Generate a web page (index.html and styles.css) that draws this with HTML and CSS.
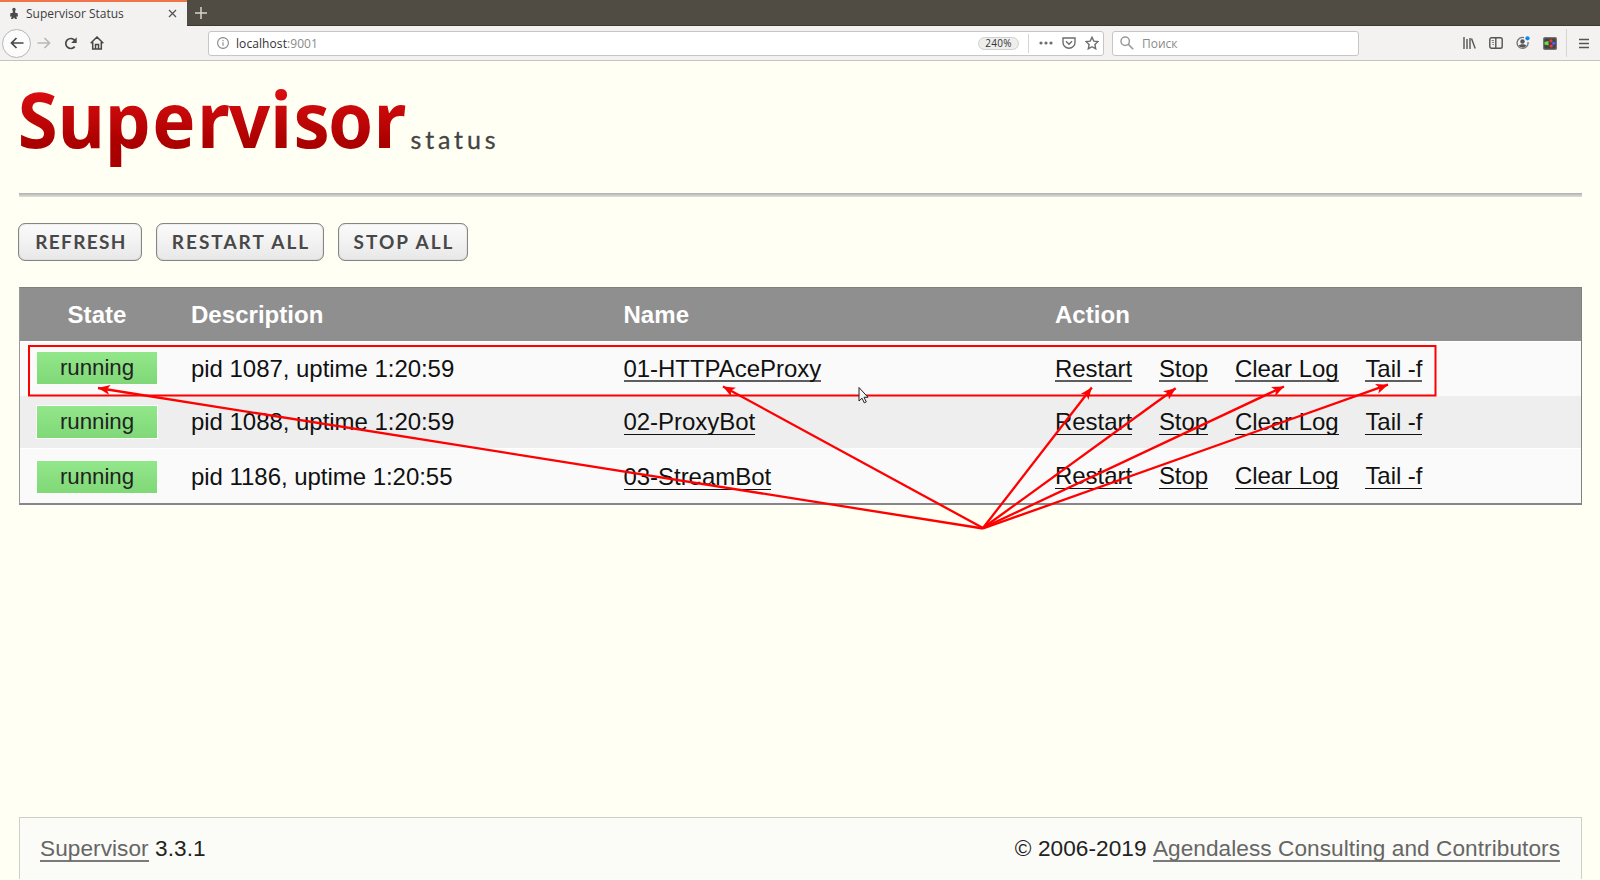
FILE: index.html
```
<!DOCTYPE html>
<html lang="en">
<head>
<meta charset="utf-8">
<title>Supervisor Status</title>
<link rel="stylesheet" href="styles.css">
</head>
<body>
<header class="chrome">
  <div class="tabstrip">
    <div class="tab">
      <svg class="favicon" width="10" height="13" viewBox="0 0 10 13"><circle cx="5" cy="2.500" r="1.700"/><path d="M4 3h2l.4 3H8.500l.5 3.500H7.300l.7 2.500H6.200L5 10.500 3.800 12H2l.7-2.500H1L1.500 6h2.100z"/></svg>
      <span class="tab-title">Supervisor Status</span>
      <svg class="tab-close" width="9" height="9" viewBox="0 0 9 9"><path d="M1 1l7 7M8 1L1 8"/></svg>
    </div>
    <svg class="newtab" width="12" height="12" viewBox="0 0 12 12"><path d="M6 0v12M0 6h12"/></svg>
  </div>
  <div class="toolbar">
    <div class="nav">
      <span class="back"><svg width="14" height="12" viewBox="0 0 14 12"><path d="M13.500 6H1.500M6.500 1l-5 5 5 5"/></svg></span>
      <svg class="forward" width="14" height="12" viewBox="0 0 14 12"><path d="M.5 6h12M7.500 1l5 5-5 5"/></svg>
      <svg class="reload" width="14" height="13" viewBox="0 0 14 13"><path d="M10.700 9.600A5 5 0 1 1 10.600 3.300"/><path class="solid" d="M12.700.3v5.600H7.200z"/></svg>
      <svg class="home" width="14" height="14" viewBox="0 0 14 14"><path d="M.7 7.200L7 1l6.300 6.200M2.700 6v7h8.600V6M5.500 13V8.500h3V13"/></svg>
    </div>
    <div class="urlbar">
      <svg class="info" width="12" height="12" viewBox="0 0 12 12"><circle cx="6" cy="6" r="5.400"/><path d="M6 5.300v3.500M6 3v1.200"/></svg>
      <span class="url">localhost<span class="port">:9001</span></span>
      <span class="zoom">240%</span>
      <span class="bar"></span>
      <svg class="dots" width="14" height="4" viewBox="0 0 14 4"><circle cx="2" cy="2" r="1.600"/><circle cx="7" cy="2" r="1.600"/><circle cx="12" cy="2" r="1.600"/></svg>
      <svg class="pocket" width="14" height="12" viewBox="0 0 14 12"><path d="M1 1h12v4.500a6 5.700 0 0 1-12 0zM4 4.300l3 2.900 3-2.900"/></svg>
      <svg class="star" width="14" height="14" viewBox="0 0 14 14"><path d="M7 1.200l1.800 3.900 4.200.5-3.100 2.900.8 4.300L7 10.700l-3.700 2.100.8-4.300L1 5.600l4.200-.5z"/></svg>
    </div>
    <div class="search">
      <svg width="14" height="14" viewBox="0 0 14 14"><circle cx="5.200" cy="5.200" r="4.200"/><path d="M8.400 8.400l4.800 4.800"/></svg>
      <span>Поиск</span>
    </div>
    <div class="tools">
      <svg width="13" height="12" viewBox="0 0 13 12"><path d="M1 0v12M4 2v10M7 1v11M8.500 1.500l3.700 10"/></svg>
      <svg width="14" height="12" viewBox="0 0 14 12"><rect x=".8" y=".8" width="12.400" height="10.400" rx="1.800"/><path d="M6.800 1v10"/><path class="thin" d="M2.500 3.500h2.500M3 5.500h2M3.500 7.500h1.500"/></svg>
      <svg width="14" height="14" viewBox="0 0 14 14"><path class="ring" d="M8 1.600A5.500 5.500 0 1 0 12 6"/><circle class="fill" cx="6.500" cy="5.500" r="2.200"/><path class="fill" d="M2.800 9.700c1-2 6.400-2 7.400 0-1.700 2.300-5.700 2.300-7.400 0z"/><circle class="blue" cx="11.500" cy="2.300" r="2.100"/></svg>
      <svg width="14" height="13" viewBox="0 0 14 13"><rect class="box" x=".5" y=".5" width="13" height="12" rx="2"/><path class="green" d="M1.500 5l4-1v4.500l-4-1z"/><circle class="red" cx="8" cy="3.800" r="1.600"/><circle class="blue2" cx="10.700" cy="6.300" r="1.600"/><circle class="red" cx="8.300" cy="9" r="1.600"/></svg>
      <span class="bar"></span>
      <svg class="menu" width="10" height="11" viewBox="0 0 10 11"><path d="M0 1.500h10M0 5.500h10M0 9.500h10"/></svg>
    </div>
  </div>
</header>
<main class="page">
  <svg class="logo" width="500" height="100" viewBox="18 70 500 100" role="img" aria-label="Supervisor status">
    <defs><linearGradient id="red" gradientUnits="userSpaceOnUse" x1="0" y1="88" x2="0" y2="158"><stop offset="0" stop-color="#dc0f12"/><stop offset=".75" stop-color="#ad0000"/><stop offset="1" stop-color="#a80000"/></linearGradient></defs>
    <text class="logo-name" fill="url(#red)" transform="scale(.93 1)" x="19.2 62.2 112.9 163.7 212.1 246 290.700 315.700 352.600 401.900" y="148.500">Supervisor</text>
    <text class="logo-sub" x="410.500" y="148.500" textLength="85">status</text>
  </svg>
  <div class="rule"></div>
  <div class="buttons">
    <a class="btn refresh">REFRESH</a>
    <a class="btn restart">RESTART ALL</a>
    <a class="btn stop">STOP ALL</a>
  </div>
  <div class="table">
    <div class="row head"><span class="state">State</span><span>Description</span><span>Name</span><span>Action</span></div>
    <div class="row first"><span class="badge">running</span><span>pid 1087, uptime 1:20:59</span><span><a>01-HTTPAceProxy</a></span><span class="actions"><a>Restart</a><a>Stop</a><a>Clear Log</a><a>Tail -f</a></span></div>
    <div class="row shade"><span class="badge">running</span><span>pid 1088, uptime 1:20:59</span><span><a>02-ProxyBot</a></span><span class="actions"><a>Restart</a><a>Stop</a><a>Clear Log</a><a>Tail -f</a></span></div>
    <div class="row last"><span class="badge">running</span><span>pid 1186, uptime 1:20:55</span><span><a>03-StreamBot</a></span><span class="actions"><a>Restart</a><a>Stop</a><a>Clear Log</a><a>Tail -f</a></span></div>
  </div>
  <footer class="footer"><span><a>Supervisor</a> 3.3.1</span><span>© 2006-2019 <a>Agendaless Consulting and Contributors</a></span></footer>
</main>
<svg class="overlay" width="1600" height="880" viewBox="0 0 1600 880">
  <defs><marker id="tip" markerUnits="userSpaceOnUse" markerWidth="14" markerHeight="12" refX="12" refY="5" orient="auto"><path d="M0 0L12 5L0 10L3 5z" fill="#f00"/></marker></defs>
  <rect x="29" y="346" width="1406.500" height="49.500"/>
  <g class="arrows">
    <path marker-end="url(#tip)" d="M983 528.500L98 388"/><path marker-end="url(#tip)" d="M983 528L723 386.500"/>
    <path marker-end="url(#tip)" d="M983 528L1091.800 387.500"/><path marker-end="url(#tip)" d="M983 528L1175.700 388.300"/>
    <path marker-end="url(#tip)" d="M983 528L1284 386.500"/><path marker-end="url(#tip)" d="M983 528.500L1388 384.700"/>
  </g>
  <path class="cursor" d="M859 387.500v13.500l3-2.800 2.300 4.700 2-1-2.300-4.600h4z"/>
</svg>
</body>
</html>
```
FILE: styles.css
```
* { box-sizing: border-box; }
body { margin: 0; width: 1600px; height: 880px; overflow: hidden; display: flex; flex-direction: column; background: #fffff3; font-family: "Liberation Sans", Arial, sans-serif; }
svg { display: block; flex: none; fill: none; }

/* browser chrome */
.chrome { height: 61px; flex: none; background: #f3f2f1; border-bottom: 1px solid #c4c4c2; font-family: "Open Sans", sans-serif; font-size: 12px; color: #3d3d3d; }
.tabstrip { height: 26px; display: flex; align-items: center; background: #504c44; border-bottom: 1px solid #3d3933; }
.tab { width: 187px; height: 26px; flex: none; align-self: flex-start; display: flex; align-items: center; padding: 0 10px 2px 9px; background: #f3f2f1; border-top: 2px solid #f0744a; }
.favicon { fill: #4a4a4a; }
.tab-title { flex: 1; margin-left: 7px; font-size: 12px; white-space: nowrap; }
.tab-close { stroke: #555; stroke-width: 1.3; }
.newtab { margin-left: 8px; stroke: #d8d4cb; stroke-width: 1.5; }
.toolbar { height: 34px; display: flex; align-items: center; }
.nav { width: 208px; flex: none; display: flex; align-items: center; padding-left: 2px; stroke: #474747; stroke-width: 1.7; }
.back { width: 29px; height: 29px; border: 1px solid #b5b5b3; border-radius: 50%; background: #fcfcfc; display: flex; align-items: center; justify-content: center; }
.forward { margin-left: 6px; stroke: #b8b8b6; }
.reload { margin-left: 13px; }
.solid { fill: #474747; stroke: none; }
.home { margin-left: 12px; stroke-width: 1.5; }
.urlbar, .search { height: 25px; display: flex; align-items: center; background: #fff; border: 1px solid #c6c6c4; border-radius: 3px; }
.urlbar { width: 896px; padding: 0 4px 0 8px; }
.info { stroke: #858585; stroke-width: 1.1; }
.url { flex: 1; margin-left: 7px; font-size: 12px; letter-spacing: .08px; color: #333; }
.port { color: #8a8a8a; }
.zoom { width: 41px; height: 13px; border: 1px solid #cfcfcf; border-radius: 7px; background: #eeeeed; font-size: 10px; letter-spacing: .3px; line-height: 11px; text-align: center; color: #333; }
.bar { width: 1px; height: 19px; background: #d5d5d3; }
.urlbar .bar { margin: 0 10px 0 9px; }
.dots { fill: #6d6d6d; }
.pocket { margin-left: 9px; stroke: #6d6d6d; stroke-width: 1.4; }
.star { margin-left: 9px; stroke: #6d6d6d; stroke-width: 1.4; }
.search { width: 247px; margin-left: 8px; padding-left: 7px; font-size: 12px; color: #8b8b8b; }
.search svg { stroke: #999; stroke-width: 1.5; }
.search span { margin-left: 8px; }
.tools { flex: 1; display: flex; align-items: center; justify-content: flex-end; padding-right: 11px; gap: 13px; stroke: #555; stroke-width: 1.4; }
.tools .bar { height: 28px; margin: 0 -1px 0 -4px; }
.thin { stroke-width: .7; }
.ring { stroke: #777; }
.fill { fill: #555; stroke: none; }
.blue { fill: #0a84ff; stroke: none; }
.box { fill: #444; stroke: #777; }
.green { fill: #6be03a; stroke: none; }
.red { fill: #f33; stroke: none; }
.blue2 { fill: #46f; stroke: none; }

/* page */
.page { flex: 1; display: flex; flex-direction: column; padding: 9px 18px 1px; }
.logo { overflow: visible; }
.logo-name { font: 700 78px "Noto Sans", sans-serif; }
.logo-sub { font: 400 25px Lato, sans-serif; fill: #444; stroke: #444; stroke-width: .3; }
.rule { height: 4px; flex: none; margin: 23px 0 0 1px; background: linear-gradient(#aeb0ae, #e0e0dc); }
.buttons { height: 38px; flex: none; margin-top: 26px; display: flex; gap: 14px; }
.btn { height: 38px; border: 1.5px solid #858585; box-shadow: inset 0 0 1px #888; border-radius: 7px; background: linear-gradient(#fbfbfb, #e8e8e8); display: flex; align-items: center; justify-content: center; padding: 0 0 2px 2px; font: 700 19px Lato, sans-serif; color: #484848; white-space: nowrap; }
.refresh { width: 124px; letter-spacing: 1.35px; }
.restart { width: 168px; letter-spacing: 2px; }
.stop { width: 130px; letter-spacing: 2px; }
.table { width: 1563px; height: 218px; flex: none; margin: 26px 0 0 1px; border: 1px solid #808080; border-left-color: #999; border-bottom: 2px solid #85858a; font-size: 24px; letter-spacing: -.04px; color: #111; }
.row { display: grid; grid-template-columns: 171px 432.500px 431.500px 1fr; align-items: center; line-height: 28px; }
.head { height: 53px; padding-top: 1px; background: #8f8f8f; color: #fff; font-weight: 700; letter-spacing: .04px; }
.state { width: 120px; margin-left: 17px; text-align: center; }
.first { height: 55px; background: #fafafa; border-top: 1px solid #fff; }
.shade { height: 52px; background: #eee; }
.last { height: 55px; padding-top: 1px; background: #fafafa; border-top: 1px solid #fff; }
.badge { width: 122px; height: 34px; margin-left: 16px; border: 1px solid #fbfffb; background: linear-gradient(#92e78a, #80d877); font-size: 22.3px; line-height: 31px; text-align: center; color: #222; }
.first .badge { position: relative; top: -1px; }
.row a { display: inline-block; line-height: 24px; height: 25px; border-bottom: 1px solid #111; }
.first a { border-bottom: 2px solid #5d5e60; }
.actions { display: flex; gap: 26.8px; }
.footer { height: 62px; flex: none; margin: auto 0 0 1px; display: flex; justify-content: space-between; align-items: center; padding: 0 21px 0 20px; border: 1px solid #cfcfc8; border-bottom: 0; background: #fbfbf8; font-size: 22.600px; letter-spacing: .07px; color: #222; }
.footer a { display: inline-block; line-height: 24px; height: 25px; border-bottom: 2px solid #7a7a7a; color: #666; }

/* annotation */
.overlay { position: absolute; left: 0; top: 0; stroke: #f00; stroke-width: 2; pointer-events: none; }
.arrows { stroke-width: 2.3; }
.overlay marker { stroke: none; }
.cursor { fill: #f5f5f5; stroke: #222; stroke-width: 1; }
```
